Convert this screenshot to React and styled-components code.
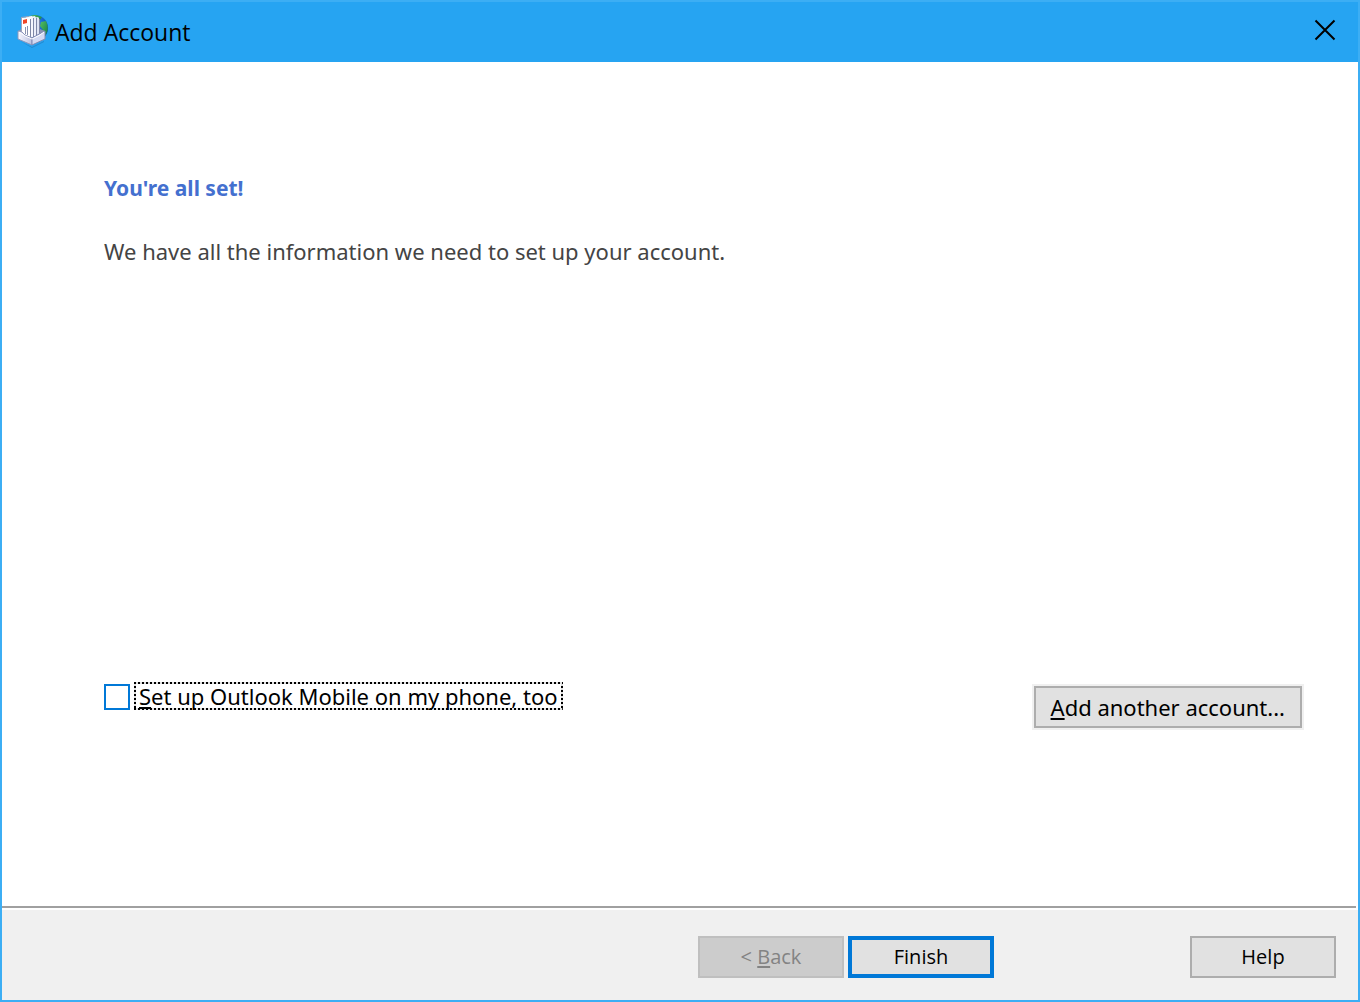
import * as React from "react";
import styled, { createGlobalStyle } from "styled-components";

const GlobalStyle = createGlobalStyle`
  * {
    box-sizing: border-box;
  }
  body {
    margin: 0;
    background: #ffffff;
    font-family: "Open Sans", "Noto Sans", sans-serif;
  }
`;

const Dialog = styled.div`
  display: flex;
  flex-direction: column;
  min-height: 100vh;
  border: 2px solid #3caef4;
`;

const TitleBar = styled.header`
  display: flex;
  align-items: center;
  height: 60px;
  padding: 0 20px 0 14px;
  background: #26a4f2;
`;

const DialogTitle = styled.h1`
  flex: 1;
  margin: 0 0 0 5px;
  font-size: 23px;
  font-weight: 400;
  line-height: 32px;
  color: #000000;
`;

const CloseButton = styled.button`
  display: flex;
  padding: 0 2px 4px;
  border: 0;
  background: none;
  color: #000000;
`;

const Content = styled.main`
  display: flex;
  flex: 1;
  flex-direction: column;
  justify-content: space-between;
  padding: 110px 56px 178px 102px;
  font-family: "Noto Sans", "Open Sans", sans-serif;
`;

const Heading = styled.h2`
  margin: 0 0 32px;
  font-size: 21px;
  font-weight: 700;
  line-height: 32px;
  color: #4470cf;
`;

const Message = styled.p`
  margin: 0;
  font-size: 22px;
  line-height: 30px;
  color: #444444;
`;

const OptionsRow = styled.div`
  display: flex;
  align-items: flex-start;
  justify-content: space-between;
`;

const CheckField = styled.div`
  display: flex;
  align-items: flex-end;
  gap: 4px;
`;

const CheckBox = styled.input`
  appearance: none;
  width: 26px;
  height: 26px;
  margin: 0;
  border: 2px solid #0078d7;
  background: #ffffff;
  &:checked {
    box-shadow: inset 0 0 0 4px #ffffff;
    background: #0078d7;
  }
`;

// square 2px dots, a dotted border would draw them round
const FocusLabel = styled.label`
  padding: 0 5px;
  font-size: 22px;
  line-height: 28px;
  color: #000000;
  background:
    repeating-linear-gradient(90deg, #000000 0 2px, #e0e0e0 2px 4px) top / 100% 2px no-repeat,
    repeating-linear-gradient(90deg, #000000 0 2px, #e0e0e0 2px 4px) bottom / 100% 2px no-repeat,
    repeating-linear-gradient(#000000 0 2px, #e0e0e0 2px 4px) left / 2px 100% no-repeat,
    repeating-linear-gradient(#000000 0 2px, #e0e0e0 2px 4px) right / 2px 100% no-repeat;
`;

const AccessKey = styled.span`
  text-decoration: underline;
  text-decoration-thickness: 2px;
  text-underline-offset: 2px;
  text-decoration-skip-ink: none;
`;

const Button = styled.button`
  min-width: 146px;
  height: 42px;
  padding: 0 14px;
  border: 2px solid #adadad;
  background: #e1e1e1;
  color: #000000;
  font-family: inherit;
  font-size: 20px;
  line-height: 32px;
  &:disabled {
    border-color: #bfbfbf;
    background: #cccccc;
    color: #838383;
  }
`;

const DefaultButton = styled(Button)`
  border: 4px solid #0078d7;
`;

const AddButton = styled(Button)`
  margin-top: 4px;
  padding: 0 15px;
  box-shadow: 0 0 0 2px #f0f0f0;
  font-size: 22px;
`;

const Footer = styled.footer`
  display: flex;
  justify-content: flex-end;
  gap: 196px;
  padding: 26px 22px 22px;
  background: #f0f0f0;
`;

const Divider = styled.hr`
  height: 2px;
  margin: 0 2px 2px 0;
  border: 0;
  background: #a0a0a0;
`;

const StepButtons = styled.div`
  display: flex;
  gap: 4px;
`;

const MailIcon = () => (
  <svg width="34" height="34" viewBox="0 0 34 34" aria-hidden="true">
    <defs>
      <radialGradient id="globe" cx="0.4" cy="0.3" r="0.8">
        <stop offset="0" stopColor="#4fa0f5" />
        <stop offset="0.5" stopColor="#1769d2" />
        <stop offset="1" stopColor="#0a3e97" />
      </radialGradient>
      <linearGradient id="land" x2="1" y2="1">
        <stop offset="0" stopColor="#5cc465" />
        <stop offset="1" stopColor="#08763d" />
      </linearGradient>
      <linearGradient id="tray" x2="1">
        <stop offset="0" stopColor="#f7f8ff" />
        <stop offset="1" stopColor="#b9c0e0" />
      </linearGradient>
    </defs>
    <path d="M4 26L16 32L28 26V27L16 33Z" fill="#1f5f96" opacity="0.4" />
    <circle cx="19" cy="13" r="13" fill="url(#globe)" />
    <path d="M10 4Q13 0 20 0L26 2L24 5L19 6L18 9L11 9Z" fill="url(#land)" />
    <path d="M25 7L30 6Q34 14 29 21L25 25L23 19L27 15L24 11Z" fill="url(#land)" />
    <path d="M2 16L7 13L24 14L29 16L16 23Z" fill="#8b93b3" />
    <path d="M16 3L22 2L23 3L23 19L17 22Z" fill="#dfe3f3" />
    <path d="M13 2L19 1L20 3L20 21L14 22Z" fill="#ebeefa" />
    <path d="M10 2L16 1L17 3L17 22L11 21Z" fill="#f6f7fe" />
    <path d="M5 3L13 2L14 4L14 22L6 19Z" fill="#ffffff" />
    <path d="M14.5 4V22M17.5 3V22M20.5 3V21M23.5 4V19" fill="none" stroke="#7e87a6" />
    <path d="M5 2.5L13 1.5M5.5 3V17" fill="none" stroke="#9da5bd" />
    <path d="M7 5L11 4V8L7 9Z" fill="#f04525" />
    <path d="M9.5 12V19M11.5 11V20" stroke="#8993b0" />
    <path d="M2 16L6 17L9 20L16 23L16 30L2 24Z" fill="url(#tray)" stroke="#8d97bc" />
    <path d="M16 23L25 18L29 16V24L16 30Z" fill="#d3d9f2" stroke="#7e89b4" />
    <path d="M3 17L9 21L16 24L24 20L28 17" fill="none" stroke="#ffffff" />
  </svg>
);

const App = () => {
  const [mobile, setMobile] = React.useState(false);

  return (
    <>
      <GlobalStyle />
      <Dialog role="dialog" aria-labelledby="dialog-title">
        <TitleBar>
          <MailIcon />
          <DialogTitle id="dialog-title">Add Account</DialogTitle>
          <CloseButton type="button" aria-label="Close">
            <svg width="22" height="22" viewBox="0 0 22 22" fill="none" stroke="currentColor" strokeWidth="2">
              <path d="M1.5 1.5L20.5 20.5M20.5 1.5L1.5 20.5" />
            </svg>
          </CloseButton>
        </TitleBar>
        <Content>
          <div>
            <Heading>You're all set!</Heading>
            <Message>We have all the information we need to set up your account.</Message>
          </div>
          <OptionsRow>
            <CheckField>
              <CheckBox
                type="checkbox"
                id="mobile"
                checked={mobile}
                onChange={(e) => setMobile(e.target.checked)}
              />
              <FocusLabel htmlFor="mobile"><AccessKey>S</AccessKey>et up Outlook Mobile on my phone, too</FocusLabel>
            </CheckField>
            <AddButton type="button"><AccessKey>A</AccessKey>dd another account...</AddButton>
          </OptionsRow>
        </Content>
        <Divider />
        <Footer>
          <StepButtons>
            <Button type="button" disabled>&lt; <AccessKey>B</AccessKey>ack</Button>
            <DefaultButton type="button">Finish</DefaultButton>
          </StepButtons>
          <Button type="button">Help</Button>
        </Footer>
      </Dialog>
    </>
  );
};

export default App;
